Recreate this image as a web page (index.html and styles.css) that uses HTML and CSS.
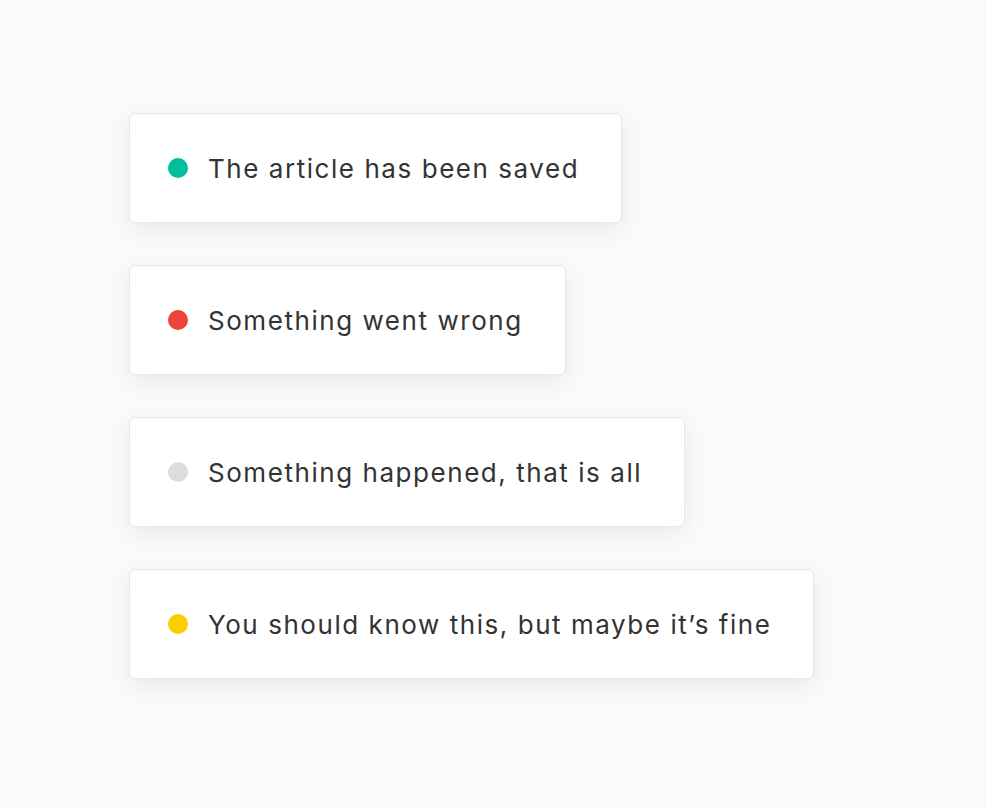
FILE: index.html
```html
<!DOCTYPE html>
<html lang="en">
<head>
    <meta charset="UTF-8">
    <meta name="viewport" content="width=device-width, initial-scale=1.0">
    <title>Notifications</title>
    <link rel="stylesheet" href="styles.css">
</head>
<body>

<div class="lista">
    <div class="aviso">
        <span class="ponto sucesso"></span>
        <span class="texto">The article has been saved</span>
    </div>
    <div class="aviso">
        <span class="ponto erro"></span>
        <span class="texto">Something went wrong</span>
    </div>
    <div class="aviso">
        <span class="ponto info"></span>
        <span class="texto">Something happened, that is all</span>
    </div>
    <div class="aviso">
        <span class="ponto alerta"></span>
        <span class="texto">You should know this, but maybe it’s fine</span>
    </div>
</div>

</body>
</html>
```

FILE: styles.css
```css
body {
    font-family: Inter, "Noto Sans", sans-serif;
    margin: 0;
    padding: 0;
    background-color: #fafafa;
}
.lista {
    display: flex;
    flex-direction: column;
    align-items: flex-start;
    gap: 42px;
    padding: 113px 0 120px 129px;
}
.aviso {
    display: flex;
    align-items: center;
    gap: 20px;
    height: 108px;
    padding: 0 42px 0 38px;
    background-color: white;
    border: 1px solid #e6e6e6;
    border-radius: 6px;
    box-shadow: 0 6px 24px rgba(0, 0, 0, 0.07);
}
.ponto {
    width: 20px;
    height: 20px;
    border-radius: 50%;
    flex-shrink: 0;
}
.ponto.sucesso { background-color: #00bf9a; }
.ponto.erro { background-color: #e8453c; }
.ponto.info { background-color: #dddddd; }
.ponto.alerta { background-color: #fccd00; }
.texto {
    font-size: 26px;
    letter-spacing: 1.55px;
    color: #333333;
    padding-top: 1px;
}
```
